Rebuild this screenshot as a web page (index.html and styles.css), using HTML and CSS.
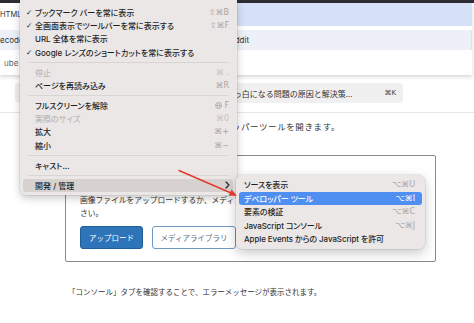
FILE: index.html
```html
<!DOCTYPE html>
<html>

<head>
  <meta charset="utf-8">
  <title>開発 / 管理 メニュー</title>
  <link rel="stylesheet" href="styles.css">
</head>

<body>
  <div class="page">
    <div class="topbar"></div>

    <div class="dropdown">
      <div class="row row-first">
        <span class="row-label">HTML</span>
        <span class="row-fill"></span>
      </div>
      <div class="row row-second">
        <span class="row-label">ecode</span>
        <span class="row-text">Reddit</span>
      </div>
      <div class="row row-third">
        <span class="row-label muted">ube</span>
      </div>
    </div>

    <div class="search">
      <div class="search-text"><span>WordPressで画面が真っ白になる問題の原因と解決策...</span></div>
      <span class="search-key">⌘K</span>
    </div>

    <hr class="divider">

    <div class="content">
      <p class="lead">表示メニューの開発・管理から、デベロッパーツールを開きます。</p>

      <div class="figure">
        <p class="figure-text">画像ファイルをアップロードするか、メディアライブラリから選択してください。</p>
        <div class="buttons">
          <button class="btn btn-primary">アップロード</button>
          <button class="btn btn-secondary">メディアライブラリ</button>
        </div>
      </div>

      <p class="note">「コンソール」タブを確認することで、エラーメッセージが表示されます。</p>
    </div>
  </div>

  <!-- View menu -->
  <div class="menu">
    <div class="item"><span class="check">✓</span><span class="label">ブックマーク バーを常に表示</span><span class="key">⇧⌘B</span></div>
    <div class="item"><span class="check">✓</span><span class="label">全画面表示でツールバーを常に表示する</span><span class="key">⇧⌘F</span></div>
    <div class="item"><span class="check"></span><span class="label">URL 全体を常に表示</span></div>
    <div class="item"><span class="check">✓</span><span class="label">Google レンズのショートカットを常に表示する</span></div>
    <div class="sep"></div>
    <div class="item disabled"><span class="check"></span><span class="label">停止</span><span class="key">⌘ .</span></div>
    <div class="item"><span class="check"></span><span class="label">ページを再読み込み</span><span class="key">⌘R</span></div>
    <div class="sep"></div>
    <div class="item"><span class="check"></span><span class="label">フルスクリーンを解除</span>
      <span class="key">
        <svg class="globe" width="7" height="7" viewBox="0 0 14 14">
          <circle cx="7" cy="7" r="6" fill="none" stroke="currentColor" stroke-width="1.6"/>
          <ellipse cx="7" cy="7" rx="2.6" ry="6" fill="none" stroke="currentColor" stroke-width="1.4"/>
          <path d="M1 7h12" stroke="currentColor" stroke-width="1.4"/>
        </svg>F
      </span>
    </div>
    <div class="item disabled"><span class="check"></span><span class="label">実際のサイズ</span><span class="key">⌘0</span></div>
    <div class="item"><span class="check"></span><span class="label">拡大</span><span class="key">⌘+</span></div>
    <div class="item"><span class="check"></span><span class="label">縮小</span><span class="key">⌘−</span></div>
    <div class="sep"></div>
    <div class="item"><span class="check"></span><span class="label">キャスト...</span></div>
    <div class="sep"></div>
    <div class="item open"><span class="check"></span><span class="label">開発 / 管理</span>
      <svg class="chevron" width="5" height="8" viewBox="0 0 5 8">
        <path d="M1 1l3 3-3 3" fill="none" stroke="#2a2a2a" stroke-width="1.3" stroke-linecap="round" stroke-linejoin="round"/>
      </svg>
    </div>
  </div>

  <!-- Developer submenu -->
  <div class="submenu">
    <div class="item"><span class="label">ソースを表示</span><span class="key">⌥⌘U</span></div>
    <div class="item active"><span class="label">デベロッパー ツール</span><span class="key">⌥⌘I</span></div>
    <div class="item"><span class="label">要素の検証</span><span class="key">⌥⌘C</span></div>
    <div class="item"><span class="label">JavaScript コンソール</span><span class="key">⌥⌘J</span></div>
    <div class="item"><span class="label">Apple Events からの JavaScript を許可</span></div>
  </div>

  <!-- annotation arrow -->
  <svg class="arrow" width="474" height="323" viewBox="0 0 474 323">
    <path d="M179 170.5L231 193" stroke="#e23a2e" stroke-width="1.5" stroke-linecap="round"/>
    <path d="M237 196L228.6 195.6L231.6 189.4Z" fill="#e23a2e"/>
  </svg>
</body>

</html>
```

FILE: styles.css
```css
* {
  box-sizing: border-box;
}

body {
  margin: 0;
  width: 474px;
  height: 323px;
  overflow: hidden;
  position: relative;
  background-color: #fff;
  color: #333;
  font-family: "Noto Sans CJK JP", sans-serif;
}

/* background page */

.topbar {
  height: 3px;
  background-color: #2d2e33;
}

.dropdown {
  width: 472px;
  background-color: #fff;
  box-shadow: 0 2px 4px rgba(0, 0, 0, 0.16);
  font-family: Inter, "Noto Sans CJK JP", sans-serif;
  font-size: 8px;
}

.row {
  display: flex;
  align-items: center;
}

.row-first {
  height: 23px;
}

.row-second {
  height: 20px;
  margin-top: 4px;
  background-color: #edf0f6;
  border-right: 1px solid #dde1ea;
}

.row-third {
  height: 25px;
}

.row-label {
  width: 24px;
  white-space: nowrap;
}

.row-first .row-label {
  font-size: 7.5px;
}

.row-third .row-label {
  padding-left: 4px;
}

.muted {
  color: #666;
}

.row-fill {
  flex: 1;
  align-self: stretch;
  background-color: #d6e1f7;
}

.row-text {
  margin-left: 201px;
}

.search {
  display: flex;
  align-items: center;
  width: 388px;
  height: 20px;
  margin: 8px 0 0 15px;
  padding: 0 7px 0 8px;
  background-color: #f0f0f1;
  border-radius: 4px;
  font-size: 8px;
}

.search-text {
  flex: 1;
  display: flex;
  justify-content: flex-end;
  overflow: hidden;
  white-space: nowrap;
  margin-right: 32px;
}

.search-text span {
  flex-shrink: 0;
}

.search-key {
  font-family: "DejaVu Sans", sans-serif;
  font-size: 7px;
  color: #444;
}

.divider {
  margin: 9px 0 0;
  border: none;
  border-top: 1px solid #e6e6e6;
}

.content {
  width: 371px;
  margin-left: 65px;
}

.lead {
  margin: 7px 0 0 3px;
  font-size: 8.5px;
  line-height: 13px;
  letter-spacing: 0.6px;
  white-space: nowrap;
}

.figure {
  margin-top: 22px;
  height: 107px;
  padding: 37px 14px 0;
  border: 1px solid #8a8a8a;
  border-radius: 2px;
}

.figure-text {
  margin: 0;
  width: 270px;
  font-size: 7.75px;
  line-height: 13px;
}

.buttons {
  display: flex;
  gap: 9px;
  margin-top: 7px;
}

.btn {
  height: 23px;
  padding: 0;
  border-radius: 3px;
  font-family: "Noto Sans CJK JP", sans-serif;
  font-size: 7.5px;
}

.btn-primary {
  width: 63px;
  background-color: #2e74b8;
  border: 1px solid #1f5f99;
  color: #fff;
}

.btn-secondary {
  width: 84px;
  background-color: #fff;
  border: 1px solid #6f97c2;
  color: #5d6b7b;
}

.note {
  margin: 23px 0 0 3px;
  font-size: 7.5px;
  line-height: 13px;
  white-space: nowrap;
}

/* menus */

.menu,
.submenu {
  position: absolute;
  background-color: #ebe7e6;
  font-family: Inter, "Noto Sans CJK JP", sans-serif;
  font-feature-settings: "palt";
  font-size: 8px;
  font-weight: 500;
  color: #1f1f1f;
}

.menu {
  left: 20px;
  top: 0;
  width: 217px;
  padding: 5.5px 0 3px;
  border-radius: 0 0 6px 6px;
  box-shadow: 0 3px 9px rgba(0, 0, 0, 0.22), 0 0 0 0.5px rgba(0, 0, 0, 0.12);
}

.submenu {
  left: 236px;
  top: 175px;
  width: 189px;
  padding: 3px;
  border-radius: 6px;
  letter-spacing: -0.1px;
  box-shadow: 0 4px 12px rgba(0, 0, 0, 0.22), 0 0 0 0.5px rgba(0, 0, 0, 0.12);
}

.item {
  display: flex;
  align-items: center;
  height: 13.3px;
  padding: 0 8px 0 6px;
  white-space: nowrap;
}

.submenu .item {
  height: 13.5px;
  padding: 0 7px 0 5px;
  border-radius: 3px;
}

.check {
  width: 9px;
  font-family: "DejaVu Sans", sans-serif;
  font-size: 7.5px;
}

.label {
  flex: 1;
}

.key {
  display: flex;
  align-items: center;
  gap: 1px;
  font-family: "DejaVu Sans", sans-serif;
  font-size: 8px;
  font-weight: normal;
  letter-spacing: 0;
  color: #aaa6a4;
}

.globe {
  margin-right: 1px;
}

.disabled .label {
  color: #bcb8b6;
}

.disabled .key {
  color: #c6c2c0;
}

.sep {
  height: 1px;
  margin: 2.85px 8px;
  background-color: #d9d5d3;
}

.open {
  margin: 0 4px 0 3px;
  padding: 0 3px 0 3px;
  border-radius: 3px;
  background-color: #d7d2d0;
}

.active {
  background-color: #4f8ff1;
  color: #fff;
}

.active .key {
  color: #fff;
}

.arrow {
  position: absolute;
  left: 0;
  top: 0;
}
```
